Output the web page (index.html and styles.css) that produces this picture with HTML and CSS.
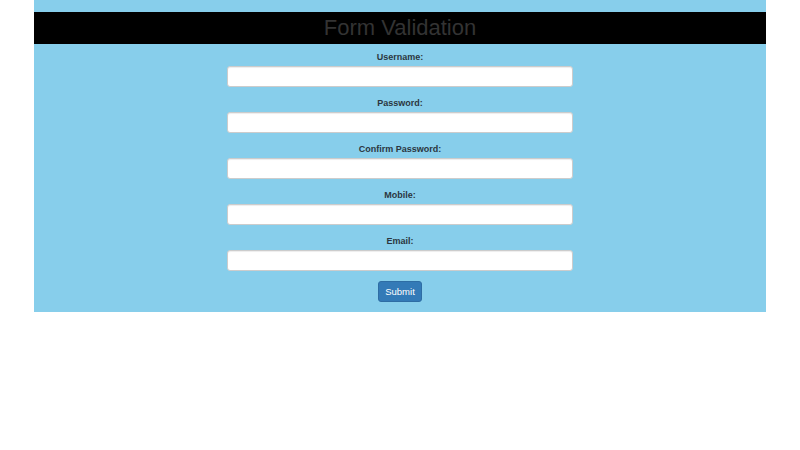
FILE: index.html
```html
<!DOCTYPE html>
<html>
<head>
<meta charset="utf-8">
<title>Form Validation</title>
<link rel="stylesheet" href="styles.css">
</head>
<body>
<div class="page">
  <h1 class="title">Form Validation</h1>
  <form class="form">
    <div class="group">
      <label class="label" for="username">Username:</label>
      <input class="input" id="username" type="text">
    </div>
    <div class="group">
      <label class="label" for="password">Password:</label>
      <input class="input" id="password" type="password">
    </div>
    <div class="group">
      <label class="label" for="confirm">Confirm Password:</label>
      <input class="input" id="confirm" type="password">
    </div>
    <div class="group">
      <label class="label" for="mobile">Mobile:</label>
      <input class="input" id="mobile" type="text">
    </div>
    <div class="group">
      <label class="label" for="email">Email:</label>
      <input class="input" id="email" type="text">
    </div>
    <div class="actions">
      <button class="btn" type="submit">Submit</button>
    </div>
  </form>
</div>
</body>
</html>
```

FILE: styles.css
```css
html, body {
  margin: 0;
  padding: 0;
  background: #ffffff;
  font-family: "Liberation Sans", Arial, Helvetica, sans-serif;
  color: #333333;
}

.page {
  margin: 0 34px;
  background: #87ceeb;
  padding: 12px 0 10px;
}

.title {
  margin: 0;
  background: #000000;
  color: #333333;
  font-size: 22px;
  font-weight: normal;
  height: 32px;
  line-height: 32px;
  text-align: center;
}

.form {
  width: 346px;
  margin: 0 auto;
  padding-top: 6px;
  display: flex;
  flex-direction: column;
  gap: 9px;
}

.group {
  display: flex;
  flex-direction: column;
  align-items: stretch;
}

.label {
  display: block;
  font-size: 9px;
  font-weight: bold;
  line-height: 12px;
  padding-top: 1px;
  text-align: center;
  margin-bottom: 3px;
  color: #2b3640;
}

.input {
  box-sizing: border-box;
  height: 21px;
  width: 100%;
  margin: 0;
  padding: 2px 6px;
  background: #ffffff;
  border: 1px solid #cccccc;
  border-radius: 3px;
  box-shadow: inset 0 1px 1px rgba(0, 0, 0, 0.075);
  font-size: 9px;
}

.actions {
  display: flex;
  justify-content: center;
  padding-top: 1px;
}

.btn {
  box-sizing: border-box;
  height: 21px;
  padding: 0 6px;
  background: #337ab7;
  border: 1px solid #2e6da4;
  border-radius: 3px;
  color: #ffffff;
  font-family: "Liberation Sans", Arial, Helvetica, sans-serif;
  font-size: 9.5px;
  line-height: 19px;
}
```
